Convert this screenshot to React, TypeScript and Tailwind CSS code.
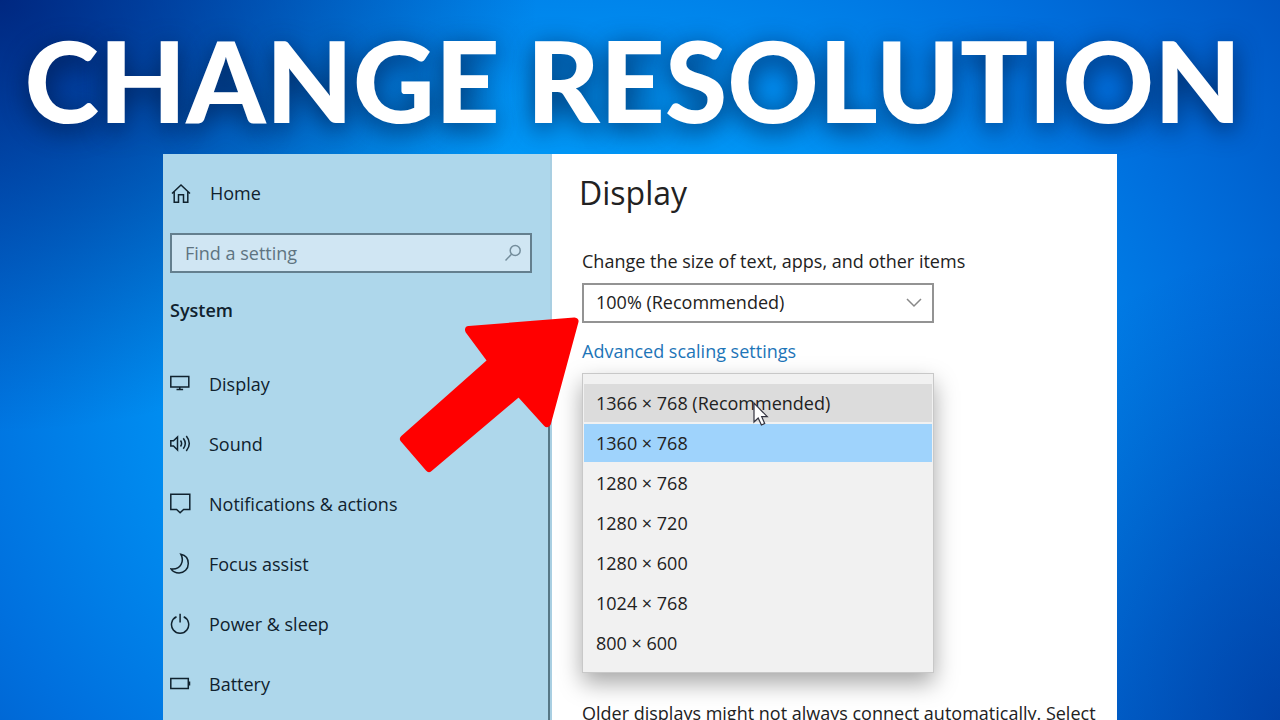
import type { ReactNode } from "react";

const resolutions = [
  "1366 × 768 (Recommended)",
  "1360 × 768",
  "1280 × 768",
  "1280 × 720",
  "1280 × 600",
  "1024 × 768",
  "800 × 600",
];

const Icon = ({ children }: { children: ReactNode }) => (
  <svg
    viewBox="0 0 22 22"
    className="h-[22px] w-[22px] shrink-0"
    fill="none"
    stroke="currentColor"
    strokeWidth="1.5"
    aria-hidden="true"
  >
    {children}
  </svg>
);

const navItems = [
  {
    label: "Display",
    icon: (
      <Icon>
        <path d="M.8 3.500h18v10.500h-18zM9.800 14v2.500M6.500 16.500h6.600" />
      </Icon>
    ),
  },
  {
    label: "Sound",
    icon: (
      <Icon>
        <path d="M.8 7.800h2.700L7.500 4v13l-4-4H.8z" />
        <path d="M10.500 7.500q2.200 3 0 6M13.300 5.200q4 5.300 0 10.600M16.300 3q6 7.500 0 15" />
      </Icon>
    ),
  },
  {
    label: "Notifications & actions",
    icon: (
      <Icon>
        <path d="M.8 1.200h19v15.300h-6.200l-3.500 3.200-3.500-3.200H.8z" />
      </Icon>
    ),
  },
  {
    label: "Focus assist",
    icon: (
      <Icon>
        <path d="M10.800 1.200c4.800 1 7.500 4.800 7.500 9.300 0 5.500-4.100 9.500-9.200 9.500-3.600 0-6.400-1.400-8.100-4.100 4.600.6 8.100-.9 10-4.200 1.800-3.200 1.700-7-.2-10.500z" />
      </Icon>
    ),
  },
  {
    label: "Power & sleep",
    icon: (
      <Icon>
        <path d="M6.500 3.800a8.600 8.600 0 1 0 7.200 0M10.100.8v8.700" />
      </Icon>
    ),
  },
  {
    label: "Battery",
    icon: (
      <Icon>
        <path d="M.8 5.500h17.500v10H.8zM19.500 8.500v4" />
      </Icon>
    ),
  },
];

const Sidebar = () => (
  <aside className="relative border-r-2 border-[#a9cfe2] bg-[#aed7eb] pl-[7px] pr-[18px] pt-[19px] text-[#10222e]">
    <a href="#home" className="flex h-10 items-center gap-[18px]">
      <Icon>
        <path d="M2 11.500 11 3l9 8.500M4.200 9.800v10.500h4.300v-7.500h5v7.500h4.300V9.800" />
      </Icon>
      Home
    </a>
    <label className="mt-5 flex h-10 items-center border-2 border-[#647f8e] bg-[#d0e6f3] px-[13px]">
      <span className="sr-only">Find a setting</span>
      <input
        type="text"
        placeholder="Find a setting"
        className="h-9 min-w-0 flex-1 bg-transparent outline-none placeholder:text-[#5e7481]"
      />
      <svg
        viewBox="0 0 18 18"
        className="-mr-[5px] h-[18px] w-[18px]"
        fill="none"
        stroke="#748d9c"
        strokeWidth="1.5"
        aria-hidden="true"
      >
        <circle cx="11.200" cy="6.500" r="5" />
        <path d="M7.500 10.200 1.500 16.500" />
      </svg>
    </label>
    <h2 className="mt-[23px] font-semibold leading-7">System</h2>
    <nav className="mt-[30px]">
      {navItems.map((item) => (
        <a
          key={item.label}
          href="#settings"
          className="flex h-15 items-center gap-[17px]"
        >
          {item.icon}
          {item.label}
        </a>
      ))}
    </nav>
    <div className="absolute bottom-0 right-0 top-[270px] w-[2px] bg-[#567786]" />
  </aside>
);

const ResolutionMenu = () => (
  <div
    role="listbox"
    aria-label="Display resolution"
    className="relative mt-2 max-w-[352px] border border-[#c8c8c8] bg-[#f1f1f1] px-px py-[9px] shadow-[0_10px_22px_rgba(0,0,0,0.35)]"
  >
    {resolutions.map((name, i) => (
      <button
        key={name}
        type="button"
        role="option"
        aria-selected={i === 1}
        className={`block h-10 w-full border-y border-[#f1f1f1] px-3 text-left ${
          i === 0 ? "bg-[#dcdcdc]" : i === 1 ? "bg-[#9fd3fc]" : ""
        }`}
      >
        {name}
      </button>
    ))}
    <svg
      viewBox="0 0 16 25"
      className="absolute left-[170px] top-[28px] h-[25px] w-4"
      aria-hidden="true"
    >
      <path
        d="M1 1v19l4.200-4 3.200 7 3.300-1.500-3-6.800h5.600z"
        fill="#fff"
        stroke="#33333f"
        strokeWidth="1.200"
      />
    </svg>
  </div>
);

const DisplaySettings = () => (
  <main className="bg-white pl-[30px] pr-4 pt-[14px] text-[#222222]">
    <h2 className="-ml-[3px] text-[32px] leading-[50px]">Display</h2>
    <label htmlFor="scale" className="mt-[29px] block leading-7">
      Change the size of text, apps, and other items
    </label>
    <div className="relative mt-[8px] max-w-[352px]">
      <select
        id="scale"
        className="block h-10 w-full appearance-none border-2 border-[#939393] bg-white px-3 pb-px"
      >
        <option>100% (Recommended)</option>
      </select>
      <svg
        viewBox="0 0 18 10"
        className="pointer-events-none absolute right-[11px] top-[15px] h-[10px] w-[18px]"
        fill="none"
        stroke="#888888"
        strokeWidth="1.500"
        aria-hidden="true"
      >
        <path d="M2 1 9 8 16 1" />
      </svg>
    </div>
    <a href="#scaling" className="mt-[14px] block leading-7 text-[#1d75b8]">
      Advanced scaling settings
    </a>
    <ResolutionMenu />
    <p className="mt-[26px] whitespace-nowrap leading-7">
      Older displays might not always connect automatically. Select
    </p>
  </main>
);

const PointerArrow = () => (
  <svg
    viewBox="0 0 182 158"
    className="absolute left-[236px] top-[162px] h-[158px] w-[182px]"
    fill="#ff0000"
    stroke="#ff0000"
    strokeWidth="8"
    strokeLinejoin="round"
    aria-hidden="true"
  >
    <path d="M175.500 5.500 70 14 93 45 5 123 30 152 120 76 148 107z" />
  </svg>
);

const App = () => {
  return (
    <div className="flex h-screen flex-col overflow-hidden bg-[radial-gradient(ellipse_42%_60%_at_0%_0%,rgba(0,15,95,0.7)_0%,rgba(0,20,110,0)_100%),radial-gradient(ellipse_28%_65%_at_100%_100%,rgba(0,30,120,0.4)_0%,rgba(0,30,120,0)_100%),radial-gradient(ellipse_70%_105%_at_45%_55%,#00a4ff_0%,#0094f5_40%,#0070de_70%,#0050bc_100%)] font-['Open_Sans','Noto_Sans',sans-serif] text-[18px]">
      <h1 className="shrink-0 whitespace-nowrap pb-1 pr-[14px] pt-2 text-center font-['Lato',sans-serif] text-[113px] font-black leading-[142px] text-white [text-shadow:0_6px_26px_rgba(0,25,70,0.8)]">
        CHANGE RESOLUTION
      </h1>
      <div className="relative mx-auto grid w-full max-w-[954px] flex-1 grid-cols-[389px_1fr]">
        <Sidebar />
        <DisplaySettings />
        <PointerArrow />
      </div>
    </div>
  );
};

export default App;
